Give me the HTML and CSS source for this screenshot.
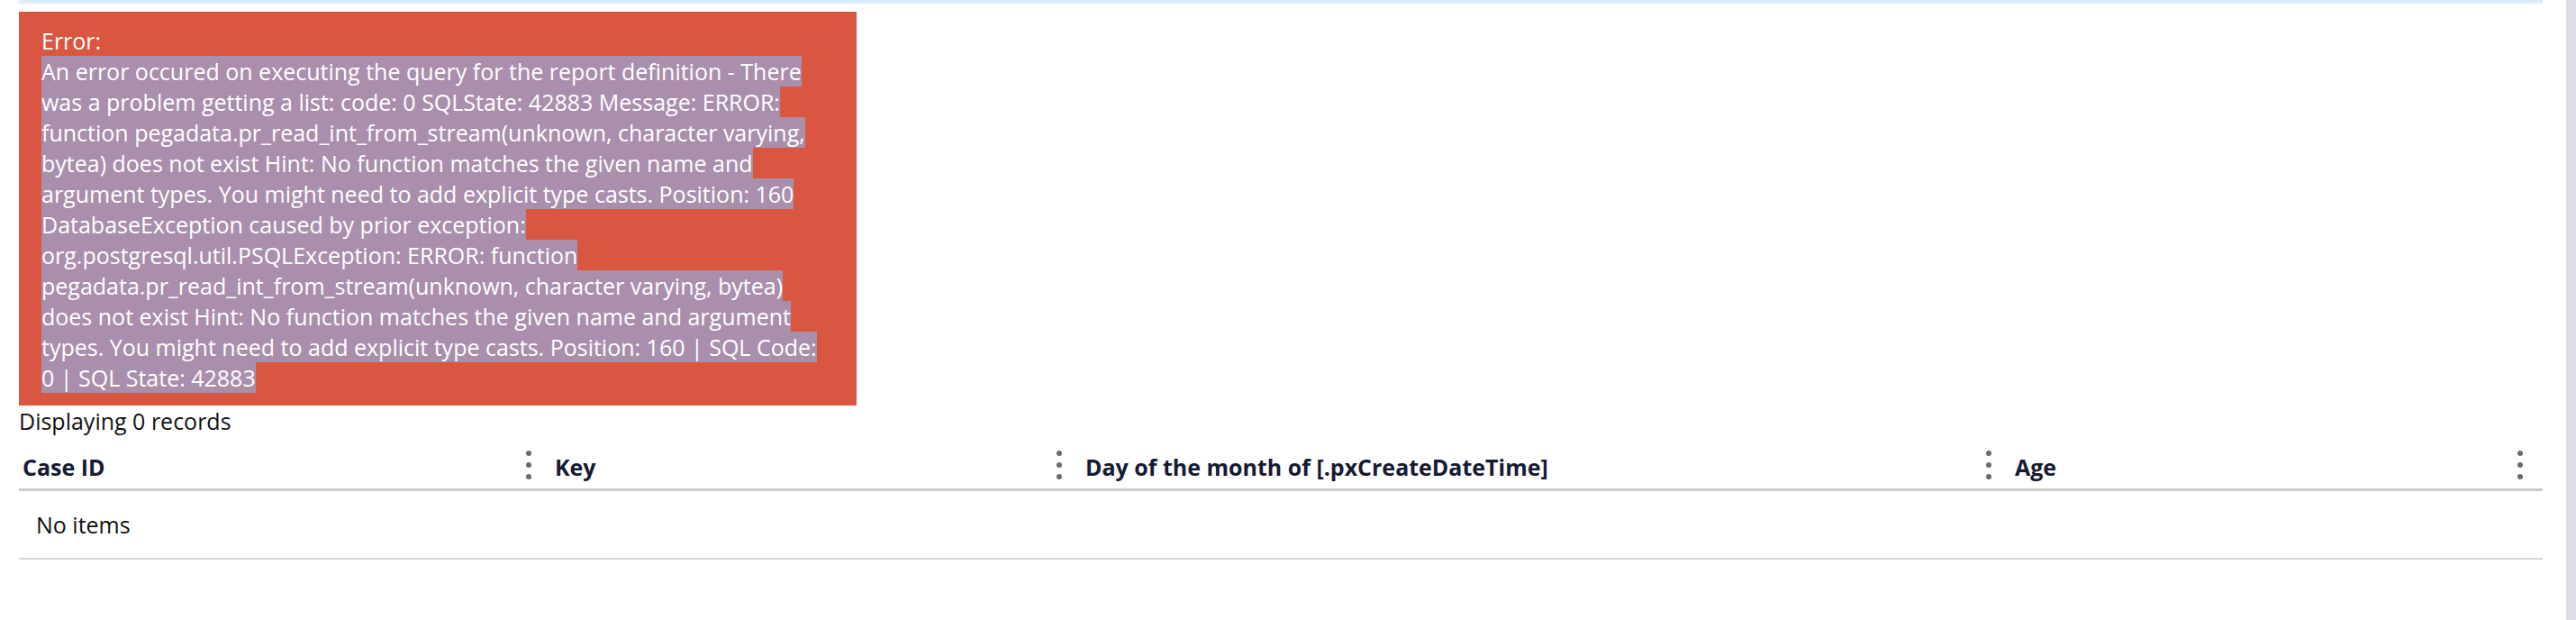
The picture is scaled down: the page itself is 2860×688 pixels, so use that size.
FILE: index.html
```html
<!DOCTYPE html>
<html lang="en">
<head>
<meta charset="utf-8">
<title>Report</title>
<link rel="stylesheet" href="styles.css">
</head>
<body>
<div class="shell">
  <main class="main">
    <div class="topbar"></div>
    <div class="error-box">
      <div class="error-title">Error:</div>
      <div class="error-msg"><span class="sel">An error occured on executing the query for the report definition - There was a problem getting a list: code: 0 SQLState: 42883 Message: ERROR: function pegadata.pr_read_int_from_stream(unknown, character varying, bytea) does not exist Hint: No function matches the given name and argument types. You might need to add explicit type casts. Position: 160 DatabaseException caused by prior exception: org.postgresql.util.PSQLException: ERROR: function pegadata.pr_read_int_from_stream(unknown, character varying, bytea) does not exist Hint: No function matches the given name and argument types. You might need to add explicit type casts. Position: 160 | SQL Code: 0 | SQL State: 42883</span></div>
    </div>
    <div class="count">Displaying 0 records</div>
    <div class="grid">
      <div class="head">
        <div class="hcell"><span class="hlabel">Case ID</span><svg class="kebab" width="6" height="32" viewBox="0 0 6 32"><circle cx="3" cy="3" r="3"/><circle cx="3" cy="16" r="3"/><circle cx="3" cy="29" r="3"/></svg></div>
        <div class="hcell"><span class="hlabel">Key</span><svg class="kebab" width="6" height="32" viewBox="0 0 6 32"><circle cx="3" cy="3" r="3"/><circle cx="3" cy="16" r="3"/><circle cx="3" cy="29" r="3"/></svg></div>
        <div class="hcell"><span class="hlabel">Day of the month of [.pxCreateDateTime]</span><svg class="kebab" width="6" height="32" viewBox="0 0 6 32"><circle cx="3" cy="3" r="3"/><circle cx="3" cy="16" r="3"/><circle cx="3" cy="29" r="3"/></svg></div>
        <div class="hcell"><span class="hlabel">Age</span><svg class="kebab" width="6" height="32" viewBox="0 0 6 32"><circle cx="3" cy="3" r="3"/><circle cx="3" cy="16" r="3"/><circle cx="3" cy="29" r="3"/></svg></div>
      </div>
      <div class="empty-row">No items</div>
    </div>
  </main>
  <div class="scrollbar"></div>
</div>
</body>
</html>
```
FILE: styles.css
```css
html, body {
  margin: 0;
  padding: 0;
  background: #ffffff;
}
body {
  font-family: "Open Sans", "Noto Sans", sans-serif;
  font-size: 25px;
  line-height: 34px;
  color: #111111;
}
.shell {
  display: flex;
  width: 2860px;
  height: 688px;
  overflow: hidden;
}
.main {
  flex: 1;
  padding: 0 26px 0 21px;
  display: flex;
  flex-direction: column;
}
.scrollbar {
  width: 11px;
  height: 688px;
  background: #dddee3;
}
.topbar {
  height: 4px;
  background: #dcedf9;
  margin-bottom: 9px;
}
.error-box {
  width: 930px;
  box-sizing: border-box;
  background: #d95741;
  color: #ffffff;
  padding: 15px 25px 14px 25px;
}
.sel {
  background: #a98fab;
}
.count {
  color: #111111;
}
.grid {
  display: flex;
  flex-direction: column;
}
.head {
  display: grid;
  grid-template-columns: 591px 589px 1032px 590px;
  border-bottom: 3px solid #cbcbcb;
}
.hcell {
  display: flex;
  align-items: center;
  justify-content: space-between;
  padding: 17px 22px 7px 4px;
}
.hlabel {
  font-weight: 700;
  color: #161a33;
}
.kebab {
  fill: #6b6b6b;
  margin-top: -4px;
}
.empty-row {
  padding: 20px 19px;
  border-bottom: 2px solid #d6d6d6;
  color: #111111;
}
```
